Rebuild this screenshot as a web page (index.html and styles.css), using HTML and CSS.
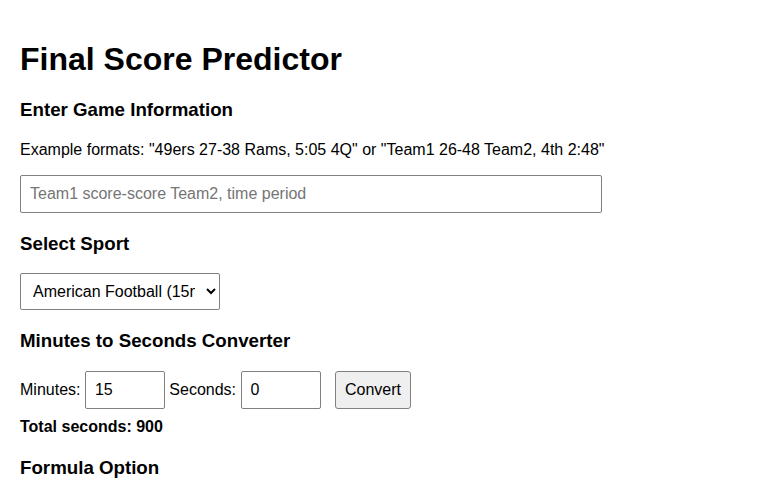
FILE: index.html
```html
<!DOCTYPE html>
<html lang="en">
<head>
    <meta charset="UTF-8">
    <meta name="viewport" content="width=device-width, initial-scale=1.0">
    <title>Final Score Predictor</title>
    <link rel="stylesheet" href="styles.css">
</head>
<body>
    <div class="container">
        <h1>Final Score Predictor</h1>

        <h3>Enter Game Information</h3>
        <p>Example formats: "49ers 27-38 Rams, 5:05 4Q" or "Team1 26-48 Team2, 4th 2:48"</p>
        <input type="text" id="gameInfo" class="game-input" placeholder="Team1 score-score Team2, time period">

        <h3>Select Sport</h3>
        <select id="sport" class="sport-select">
            <option>American Football (15min quarters)</option>
            <option>Basketball (12min quarters)</option>
            <option>Hockey (20min periods)</option>
            <option>Soccer (45min halves)</option>
        </select>

        <h3>Minutes to Seconds Converter</h3>
        <div class="converter">
            <label for="minutes">Minutes:</label>
            <input type="number" id="minutes" class="small-input" value="15">
            <label for="seconds">Seconds:</label>
            <input type="number" id="seconds" class="small-input" value="0">
            <button onclick="convertTime()">Convert</button>
        </div>
        <div class="total" id="totalSeconds">Total seconds: 900</div>

        <h3>Formula Option</h3>
    </div>

    <script>
        function convertTime() {
            const m = parseFloat(document.getElementById('minutes').value) || 0;
            const s = parseFloat(document.getElementById('seconds').value) || 0;
            document.getElementById('totalSeconds').textContent = 'Total seconds: ' + Math.round(m * 60 + s);
        }
    </script>
</body>
</html>
```

FILE: styles.css
```css
body {
    font-family: 'Liberation Sans', Arial, sans-serif;
    font-size: 16px;
    color: #000;
    background: #fff;
    margin: 0;
    padding: 20px;
}

.container {
    max-width: 800px;
}

h1 {
    font-size: 32px;
    margin: 21px 0;
}

h3 {
    font-size: 18.72px;
    margin: 20px 0 18px;
}

p {
    margin: 20px 0 16px;
}

input,
select,
button {
    font-family: 'Liberation Sans', Arial, sans-serif;
    font-size: 16px;
}

.game-input {
    box-sizing: border-box;
    width: 582px;
    height: 38px;
    padding: 8px 9px;
    border: 1px solid #808080;
    border-radius: 2px;
}

.game-input::placeholder {
    color: #757575;
}

.sport-select {
    box-sizing: border-box;
    width: 200px;
    height: 37px;
    padding: 8px;
    border: 1px solid #808080;
    border-radius: 2px;
    background: #fff;
}

.converter {
    display: flex;
    align-items: center;
    gap: 4.45px;
    padding-top: 1px;
}

.small-input {
    box-sizing: border-box;
    width: 80px;
    height: 38px;
    padding: 8px 9px;
    border: 1px solid #808080;
    border-radius: 2px;
}

button {
    height: 38px;
    padding: 8px 9px;
    margin-left: 10px;
    background: #efefef;
    border: 1px solid #808080;
    border-radius: 3px;
    cursor: pointer;
}

.total {
    font-weight: bold;
    margin: 9px 0 21px;
}
```
